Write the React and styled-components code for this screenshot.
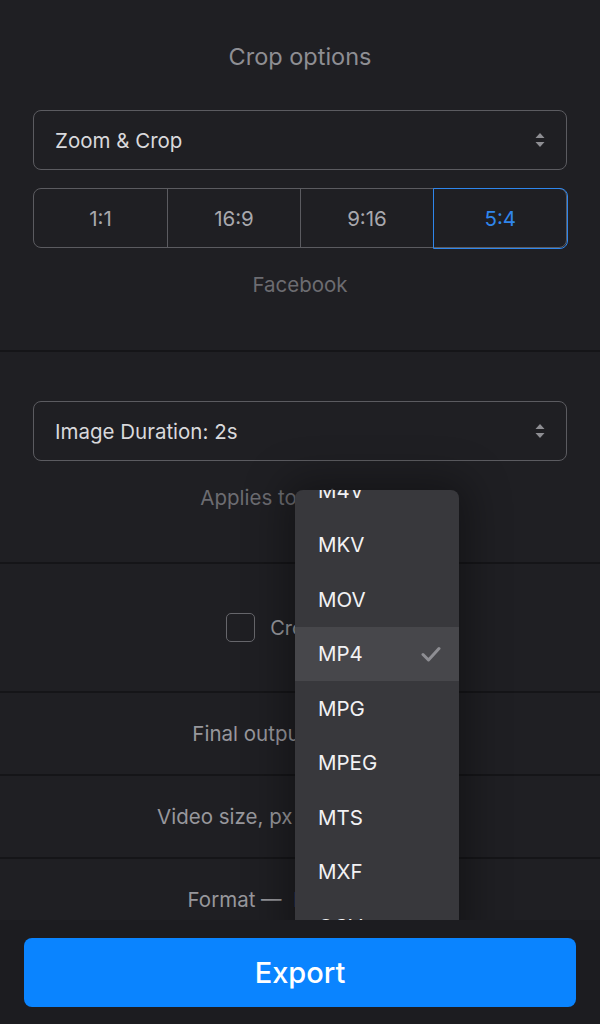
import React from "react";
import styled, { createGlobalStyle } from "styled-components";

const GlobalStyle = createGlobalStyle`
  html, body {
    margin: 0;
    padding: 0;
    background: #1f1f23;
  }
  * {
    box-sizing: border-box;
  }
`;

const Page = styled.div`
  width: 600px;
  height: 1024px;
  display: flex;
  flex-direction: column;
  background: #1f1f23;
  font-family: Inter, "Noto Sans", sans-serif;
  overflow: hidden;
`;

const Content = styled.div`
  position: relative;
  flex: 1;
  overflow: hidden;
  display: flex;
  flex-direction: column;
`;

const Section = styled.section`
  display: flex;
  flex-direction: column;
  align-items: stretch;
  padding: ${(p) => p.$pad || "0 33px"};
  min-height: ${(p) => p.$h || "auto"};
  justify-content: ${(p) => (p.$center ? "center" : "flex-start")};
  border-bottom: 2px solid #151518;
  flex-shrink: 0;
`;

const Title = styled.h2`
  margin: 0 0 36px;
  font-size: 23.5px;
  font-weight: 400;
  line-height: 34px;
  text-align: center;
  color: #8e8e93;
`;

const Select = styled.div`
  height: 60px;
  border: 1.5px solid #5b5b60;
  border-radius: 8px;
  display: flex;
  align-items: center;
  justify-content: space-between;
  padding: 0 20px 0 21px;
  font-size: 20.5px;
  color: #d9d9dc;
`;

const Segments = styled.div`
  margin-top: 18px;
  height: 60px;
  display: grid;
  grid-template-columns: repeat(4, 1fr);
  border: 1.5px solid #5b5b60;
  border-radius: 8px;
`;

const Segment = styled.div`
  display: flex;
  align-items: center;
  justify-content: center;
  font-size: 20.5px;
  color: ${(p) => (p.$active ? "#2f86ec" : "#a8a8ad")};
  border-left: 1.5px solid #5b5b60;
  &:first-child {
    border-left: none;
  }
  ${(p) =>
    p.$active &&
    `
    margin: -1.5px -1.5px -1.5px 0;
    border: 1.5px solid #2f86ec;
    border-radius: 0 8px 8px 0;
  `}
`;

const Hint = styled.p`
  margin: 22px 0 0;
  font-size: 20.5px;
  line-height: 30px;
  text-align: center;
  color: #6c6c71;
  white-space: nowrap;
`;

const CheckRow = styled.label`
  display: flex;
  align-items: center;
  justify-content: center;
  gap: 15px;
  font-size: 20px;
  color: #9a9a9f;
`;

const Box = styled.span`
  width: 29px;
  height: 29px;
  border: 1.5px solid #66666b;
  border-radius: 5px;
`;

const Label = styled.div`
  text-align: center;
  font-size: 20.5px;
  line-height: 30px;
  color: #97979c;
  white-space: pre;
`;

const Menu = styled.div`
  position: absolute;
  left: 295px;
  top: 490px;
  width: 164px;
  height: 460px;
  background: #38383c;
  border-radius: 8px 8px 0 0;
  overflow: hidden;
  box-shadow: 0 0 40px 10px rgba(0, 0, 0, 0.35);
  z-index: 5;
`;

const MenuList = styled.ul`
  list-style: none;
  margin: -27px 0 0;
  padding: 0;
`;

const MenuItem = styled.li`
  height: 54.5px;
  display: flex;
  align-items: center;
  justify-content: space-between;
  padding: 0 18px 0 23px;
  font-size: 20.5px;
  color: #f2f2f4;
  background: ${(p) => (p.$selected ? "#47474b" : "transparent")};
`;

const Footer = styled.footer`
  flex-shrink: 0;
  height: 104px;
  padding: 18px 24px 17px;
  background: #1c1c20;
  position: relative;
  z-index: 10;
`;

const ExportButton = styled.button`
  width: 100%;
  height: 69px;
  border: none;
  border-radius: 8px;
  background: #0a84ff;
  color: #ffffff;
  font-family: inherit;
  font-size: 29px;
  font-weight: 500;
`;

const Stepper = () => (
  <svg width="12" height="16" viewBox="0 0 12 16">
    <path d="M6 1 L10.5 6 H1.5 Z" fill="#8e8e93" />
    <path d="M6 15 L10.5 10 H1.5 Z" fill="#8e8e93" />
  </svg>
);

const Check = () => (
  <svg width="20" height="16" viewBox="0 0 20 16">
    <path
      d="M2 8.5 L7.5 14 L18 2.5"
      fill="none"
      stroke="#8e8e93"
      strokeWidth="3"
      strokeLinecap="round"
      strokeLinejoin="round"
    />
  </svg>
);

const formats = ["M4V", "MKV", "MOV", "MP4", "MPG", "MPEG", "MTS", "MXF", "OGV"];

export default function App() {
  return (
    <>
      <GlobalStyle />
      <Page>
        <Content>
          <Section $pad="40px 33px 50px">
            <Title>Crop options</Title>
            <Select>
              Zoom &amp; Crop
              <Stepper />
            </Select>
            <Segments>
              <Segment>1:1</Segment>
              <Segment>16:9</Segment>
              <Segment>9:16</Segment>
              <Segment $active>5:4</Segment>
            </Segments>
            <Hint>Facebook</Hint>
          </Section>

          <Section $pad="49px 33px 49px">
            <Select>
              Image Duration: 2s
              <Stepper />
            </Select>
            <Hint>Applies to all images</Hint>
          </Section>

          <Section $center $h="129px">
            <CheckRow>
              <Box />
              Crop video
            </CheckRow>
          </Section>

          <Section $center $h="83px">
            <Label>Final output resolution</Label>
          </Section>

          <Section $center $h="83px">
            <Label>Video size, px — 1350 × 1080</Label>
          </Section>

          <Section $center $h="83px">
            <Label>{"Format —  MP4 (H264)"}</Label>
          </Section>

          <Menu>
            <MenuList>
              {formats.map((f) => (
                <MenuItem key={f} $selected={f === "MP4"}>
                  {f}
                  {f === "MP4" && <Check />}
                </MenuItem>
              ))}
            </MenuList>
          </Menu>
        </Content>
        <Footer>
          <ExportButton>Export</ExportButton>
        </Footer>
      </Page>
    </>
  );
}
